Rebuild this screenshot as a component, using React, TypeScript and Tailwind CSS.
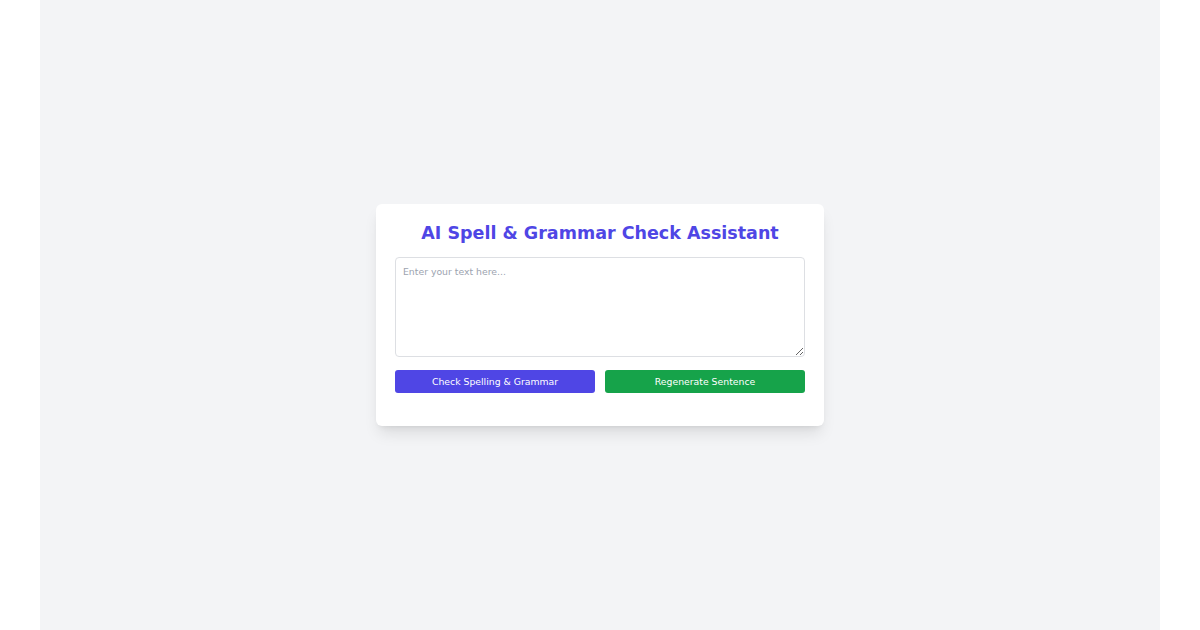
import React, { useState } from "react";

const App = () => {
  const [text, setText] = useState("");

  return (
    <div className="min-h-screen bg-white font-['DejaVu_Sans',sans-serif]">
      <div className="mx-10 h-[630px] bg-[#f3f4f6] flex items-center justify-center">
        <div className="w-[448px] bg-white rounded-md shadow-lg px-[19px] pt-[17px] pb-[33px]">
          <h1 className="text-center text-[17.5px] leading-6 font-bold text-[#4f46e5]">
            AI Spell &amp; Grammar Check Assistant
          </h1>
          <textarea
            value={text}
            onChange={(e) => setText(e.target.value)}
            placeholder="Enter your text here..."
            className="mt-3 block w-full h-[100px] p-[7px] text-[9.3px] leading-[14px] text-gray-800 placeholder:text-[#9ca3af] border border-[#dddfe3] rounded-[4px] outline-none"
          />
          <div className="mt-[13px] flex gap-[10px]">
            <button className="flex-1 h-[23px] rounded-[3px] bg-[#4f46e5] text-white text-[9.3px]">
              Check Spelling &amp; Grammar
            </button>
            <button className="flex-1 h-[23px] rounded-[3px] bg-[#16a34a] text-white text-[9.3px]">
              Regenerate Sentence
            </button>
          </div>
        </div>
      </div>
    </div>
  );
};

export default App;
